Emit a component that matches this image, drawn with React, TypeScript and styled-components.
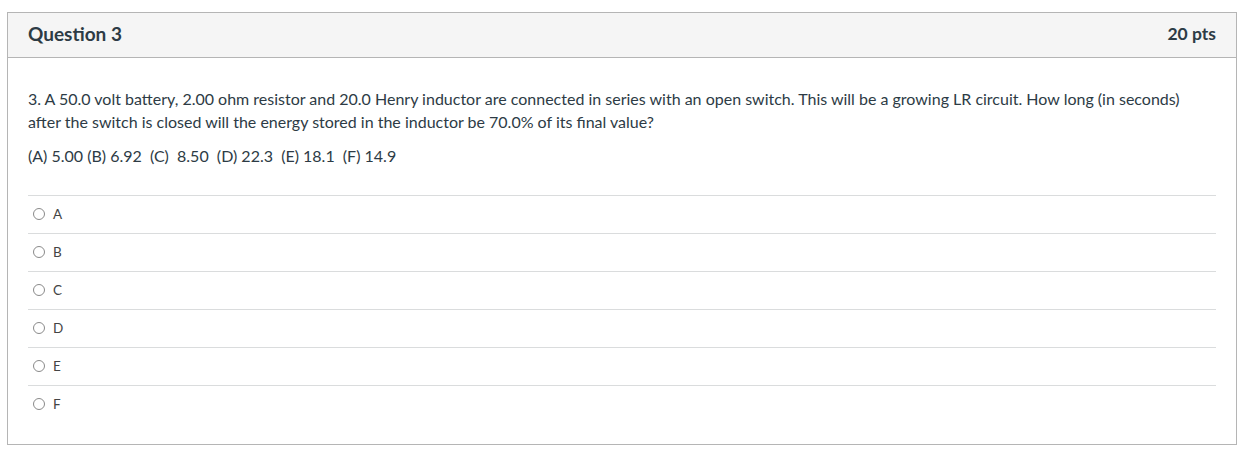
import styled, { createGlobalStyle } from "styled-components";

const GlobalStyle = createGlobalStyle`
	body {
		margin: 0;
		background: #fff;
		font-family: Lato, "Open Sans", sans-serif;
		color: #2d3b45;
	}
`;

const Page = styled.div`
	padding: 12px 6px 10px 7px;
`;

const QuestionBox = styled.div`
	border: 1px solid #b5b5b5;
`;

const Header = styled.div`
	display: flex;
	justify-content: space-between;
	align-items: center;
	height: 44px;
	padding: 0 20px 0 20px;
	background: #f5f5f5;
	border-bottom: 1px solid #b5b5b5;
	font-weight: 700;
	color: #2d3b45;
`;

const Title = styled.span`
	font-size: 19px;
	margin-top: -4px;
`;

const Points = styled.span`
	font-size: 17.5px;
	margin-top: -4px;
`;

const Body = styled.div`
	padding: 29px 20px 21px 20px;
	font-size: 16px;
	line-height: 23px;
	color: #2d3b45;
`;

const Para = styled.p`
	margin: 0 0 11px 0;
`;

const Answers = styled.div`
	margin-top: 28px;
	border-top: 1px solid #dadcdd;
`;

const AnswerRow = styled.label`
	display: flex;
	align-items: center;
	gap: 8px;
	height: 37px;
	padding-left: 5px;
	border-bottom: 1px solid #dadcdd;
	font-size: 13.5px;
	color: #444;
	&:last-child {
		border-bottom: none;
	}
`;

const Radio = styled.span`
	width: 12px;
	height: 12px;
	border: 1px solid #8a8a8a;
	border-radius: 50%;
	box-sizing: border-box;
	margin-top: -1px;
`;

const options = ["A", "B", "C", "D", "E", "F"];

function App() {
	return (
		<>
			<GlobalStyle />
			<Page>
				<QuestionBox>
					<Header>
						<Title>Question 3</Title>
						<Points>20 pts</Points>
					</Header>
					<Body>
						<Para>
							3. A 50.0 volt battery, 2.00 ohm resistor and 20.0 Henry inductor are connected in series with an open switch. This will be a growing LR circuit. How long (in seconds) after the switch is closed will the energy stored in the inductor be 70.0% of its final value?
						</Para>
						<Para>(A) 5.00 (B) 6.92&nbsp; (C)&nbsp; 8.50&nbsp; (D) 22.3&nbsp; (E) 18.1&nbsp; (F) 14.9</Para>
						<Answers>
							{options.map((o) => (
								<AnswerRow key={o}>
									<Radio />
									{o}
								</AnswerRow>
							))}
						</Answers>
					</Body>
				</QuestionBox>
			</Page>
		</>
	);
}

export default App;
